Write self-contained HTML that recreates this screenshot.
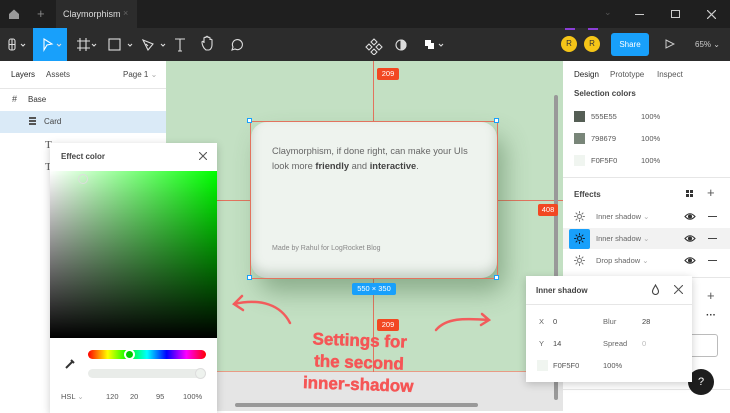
<!DOCTYPE html>
<html><head><meta charset="utf-8"><style>
*{box-sizing:border-box;margin:0;padding:0}
body{width:730px;height:411px;overflow:hidden;position:relative;font-family:"Liberation Sans",sans-serif;font-size:8px;color:#333;background:#fff}
.a{position:absolute}
.w{color:#fff}
</style></head><body>
<!-- title bar -->
<div class="a" style="left:0;top:0;width:730px;height:28px;background:#1f1f1f"></div>
<div class="a" style="left:56px;top:0;width:81px;height:28px;background:#2c2c2c"></div>
<svg class="a" style="left:8px;top:8px" width="12" height="12"><path d="M1 6 L6 1.5 L11 6 V11 H1Z" fill="#999"/></svg>
<div class="a" style="left:37px;top:6px;color:#888;font-size:13px">+</div>
<div class="a w" style="left:63px;top:9px;font-size:9px;color:#ddd">Claymorphism</div>
<div class="a" style="left:123px;top:8px;color:#666;font-size:9px">×</div>
<div class="a" style="left:604px;top:7px;color:#555;font-size:9px">⌄</div>
<div class="a" style="left:635px;top:14px;width:9px;height:1px;background:#ccc"></div>
<div class="a" style="left:671px;top:10px;width:9px;height:8px;border:1px solid #ccc"></div>
<svg class="a" style="left:707px;top:10px" width="9" height="9"><path d="M0 0L9 9M9 0L0 9" stroke="#ccc" stroke-width="1.2"/></svg>
<!-- toolbar -->
<div class="a" style="left:0;top:28px;width:730px;height:33px;background:#2c2c2c"></div>
<div class="a" style="left:33px;top:28px;width:34px;height:33px;background:#18a0fb"></div>
<svg class="a" style="left:0;top:28px" width="250" height="33" fill="none" stroke="#ddd" stroke-width="1.1">
<rect x="9" y="11" width="6" height="11" rx="2"/><path d="M12 11v11M9 16.5h6"/>
<path d="M21 16l2 2 2-2M57 16l2 2 2-2M92 16l2 2 2-2M128 16l2 2 2-2M161 16l2 2 2-2"/>
<path d="M44 11 L52 16 L47 17 L44 22Z" stroke="#fff"/>
<path d="M80 10v13M86 10v13M77 13h13M77 20h13"/>
<rect x="109" y="11" width="11" height="11"/>
<path d="M143 12 L153 16 L148 22 Z M146 16l2 2"/>
<path d="M175 11h10M180 11v12M178 23h4"/>
<path d="M206 22c-3-2-4-6-4-8 0-1 2-1 2 1v-5c0-1 2-1 2 0v-1c0-1 2-1 2 0v1c0-1 2-1 2 0v2c0-1 2-1 2 0v5c0 3-2 5-3 5z"/>
<path d="M232 22l1-3a5 5 0 1 1 2 2z"/>
</svg>
<svg class="a" style="left:365px;top:35px" width="85" height="20" fill="none" stroke="#ddd" stroke-width="1.1">
<path d="M9 4l3 3-3 3-3-3zM4 9l3 3-3 3-3-3zM14 9l3 3-3 3-3-3zM9 14l3 3-3 3-3-3z"/>
<circle cx="36" cy="10" r="5"/><path d="M36 5a5 5 0 0 1 0 10z" fill="#ddd"/>
<rect x="60" y="5" width="6" height="6" fill="#fff" stroke="none"/><rect x="63" y="8" width="6" height="6" fill="#fff" stroke="none"/>
<path d="M74 9l2 2 2-2"/>
</svg>
<div class="a" style="left:565px;top:28px;width:10px;height:2px;background:#8b3fd6"></div>
<div class="a" style="left:588px;top:28px;width:10px;height:2px;background:#8b3fd6"></div>
<div class="a" style="left:561px;top:36px;width:16px;height:16px;border-radius:50%;background:#f5c518;font-size:8px;text-align:center;line-height:16px;color:#333">R</div>
<div class="a" style="left:584px;top:36px;width:16px;height:16px;border-radius:50%;background:#f5c518;font-size:8px;text-align:center;line-height:16px;color:#333">R</div>
<div class="a w" style="left:611px;top:33px;width:38px;height:23px;border-radius:3px;background:#18a0fb;font-size:8px;text-align:center;line-height:23px">Share</div>
<svg class="a" style="left:665px;top:39px" width="10" height="10"><path d="M1 1L9 5L1 9Z" fill="none" stroke="#ccc"/></svg>
<div class="a" style="left:695px;top:40px;color:#ccc;font-size:8px">65% ⌄</div>
<!-- left panel -->
<div class="a" style="left:0;top:61px;width:166px;height:350px;background:#fff"></div>
<div class="a" style="left:11px;top:70px;font-size:8px;color:#222">Layers</div>
<div class="a" style="left:46px;top:70px;font-size:8px;color:#444">Assets</div>
<div class="a" style="left:123px;top:70px;font-size:8px;color:#444">Page 1 <span style="color:#aaa">⌄</span></div>
<div class="a" style="left:0;top:88px;width:166px;height:1px;background:#e6e6e6"></div>
<div class="a" style="left:12px;top:94px;font-size:9px;color:#444">#</div>
<div class="a" style="left:28px;top:95px;font-size:8px;color:#333">Base</div>
<div class="a" style="left:0;top:111px;width:166px;height:22px;background:#daeaf7"></div>
<div class="a" style="left:29px;top:117px;width:7px;height:1.5px;background:#555;box-shadow:0 3px 0 #555,0 6px 0 #555"></div>
<div class="a" style="left:44px;top:117px;font-size:8px;color:#444">Card</div>
<div class="a" style="left:45px;top:139px;font-size:11px;color:#555;font-family:'Liberation Serif',serif">T</div>
<div class="a" style="left:45px;top:161px;font-size:11px;color:#555;font-family:'Liberation Serif',serif">T</div>
<!-- canvas -->
<div class="a" style="left:166px;top:61px;width:397px;height:311px;background:#c3e0c3"></div>
<div class="a" style="left:166px;top:372px;width:397px;height:39px;background:#e5e5e5"></div>
<div class="a" style="left:166px;top:371px;width:397px;height:1px;background:#e89b85"></div>
<div class="a" style="left:166px;top:200px;width:397px;height:1px;background:#e2735e"></div>
<div class="a" style="left:373px;top:61px;width:1px;height:311px;background:#e2735e"></div>
<div class="a" style="left:235px;top:403px;width:243px;height:4px;border-radius:2px;background:#999"></div>
<div class="a" style="left:554px;top:95px;width:4px;height:305px;border-radius:2px;background:#999"></div>
<div class="a w" style="left:377px;top:68px;width:22px;height:12px;background:#f24822;border-radius:2px;font-size:7.5px;text-align:center;line-height:12px">209</div>
<div class="a w" style="left:377px;top:319px;width:22px;height:12px;background:#f24822;border-radius:2px;font-size:7.5px;text-align:center;line-height:12px">209</div>
<div class="a w" style="left:538px;top:204px;width:20px;height:12px;background:#f24822;border-radius:2px;font-size:7.5px;text-align:center;line-height:12px">408</div>
<!-- card -->
<div class="a" style="left:251px;top:122px;width:246px;height:156px;border-radius:16px;background:#eef3ee;box-shadow:8px 14px 24px rgba(70,110,70,.45),inset 0 -6px 10px rgba(120,140,120,.35)"></div>
<div class="a" style="left:250px;top:121px;width:248px;height:158px;border:1px solid #e2735e"></div>
<div class="a" style="left:247px;top:118px;width:5px;height:5px;background:#fff;border:1px solid #18a0fb"></div>
<div class="a" style="left:494px;top:118px;width:5px;height:5px;background:#fff;border:1px solid #18a0fb"></div>
<div class="a" style="left:247px;top:275px;width:5px;height:5px;background:#fff;border:1px solid #18a0fb"></div>
<div class="a" style="left:494px;top:275px;width:5px;height:5px;background:#fff;border:1px solid #18a0fb"></div>
<div class="a" style="left:272px;top:144px;font-size:9.3px;line-height:15px;color:#666;width:215px">Claymorphism, if done right, can make your UIs look more <b style="color:#444">friendly</b> and <b style="color:#444">interactive</b>.</div>
<div class="a" style="left:272px;top:245px;font-size:7px;color:#888">Made by Rahul for LogRocket Blog</div>
<div class="a w" style="left:352px;top:283px;width:44px;height:12px;background:#18a0fb;border-radius:2px;font-size:7.5px;text-align:center;line-height:12px">550 × 350</div>
<svg class="a" style="left:166px;top:290px" width="397" height="60" fill="none" stroke="#f25c5c" stroke-width="2.5" stroke-linecap="round">
<path d="M124 33 C115 15 95 8 68 14 M76 6 L68 14 L77 20"/>
<path d="M270 40 C280 28 298 28 323 30 M316 24 L323 30 L315 35"/>
</svg>
<div class="a" style="left:284px;top:330px;width:150px;text-align:center;font-size:17px;font-weight:bold;color:#f55656;line-height:22px;transform:rotate(2deg);-webkit-text-stroke:0.5px #f55656">Settings for<br>the second<br>inner-shadow</div>
<!-- effect color popup -->
<div class="a" style="left:50px;top:143px;width:167px;height:270px;background:#fff;box-shadow:0 2px 8px rgba(0,0,0,.2)"></div>
<div class="a" style="left:61px;top:152px;font-size:8px;font-weight:bold;color:#444">Effect color</div>
<svg class="a" style="left:199px;top:152px" width="8" height="8"><path d="M0 0L8 8M8 0L0 8" stroke="#555" stroke-width="1.1"/></svg>
<div class="a" style="left:50px;top:171px;width:167px;height:167px;background:linear-gradient(to top,#000,transparent),linear-gradient(to right,#fff,#00ff00)"></div>
<div class="a" style="left:78px;top:174px;width:10px;height:10px;border-radius:50%;border:1px solid #ddd"></div>
<svg class="a" style="left:64px;top:358px" width="12" height="12"><path d="M2 10L8 4M7 2l3 3" stroke="#333" stroke-width="2"/></svg>
<div class="a" style="left:88px;top:350px;width:118px;height:9px;border-radius:5px;background:linear-gradient(to right,#f00,#ff0,#0f0,#0ff,#00f,#f0f,#f00)"></div>
<div class="a" style="left:124px;top:349px;width:11px;height:11px;border-radius:50%;background:#0c0;border:2px solid #fff"></div>
<div class="a" style="left:88px;top:369px;width:118px;height:9px;border-radius:5px;background:#e9ece9"></div>
<div class="a" style="left:195px;top:368px;width:11px;height:11px;border-radius:50%;background:#eef2ee;border:1px solid #ddd"></div>
<div class="a" style="left:61px;top:392px;font-size:7.5px;color:#555">HSL <span style="color:#aaa">⌄</span></div>
<div class="a" style="left:106px;top:392px;font-size:7.5px;color:#555">120</div>
<div class="a" style="left:130px;top:392px;font-size:7.5px;color:#555">20</div>
<div class="a" style="left:156px;top:392px;font-size:7.5px;color:#555">95</div>
<div class="a" style="left:183px;top:392px;font-size:7.5px;color:#555">100%</div>
<!-- right panel -->
<div class="a" style="left:563px;top:61px;width:167px;height:350px;background:#fff"></div>
<div class="a" style="left:574px;top:70px;font-size:8px;color:#222">Design</div>
<div class="a" style="left:610px;top:70px;font-size:8px;color:#555">Prototype</div>
<div class="a" style="left:657px;top:70px;font-size:8px;color:#555">Inspect</div>
<div class="a" style="left:574px;top:89px;font-size:8px;font-weight:bold;color:#444">Selection colors</div>
<div class="a" style="left:574px;top:111px;width:11px;height:11px;background:#555e55"></div>
<div class="a" style="left:591px;top:112px;font-size:7.5px;color:#555">555E55</div>
<div class="a" style="left:641px;top:112px;font-size:7.5px;color:#555">100%</div>
<div class="a" style="left:574px;top:133px;width:11px;height:11px;background:#798679"></div>
<div class="a" style="left:591px;top:134px;font-size:7.5px;color:#555">798679</div>
<div class="a" style="left:641px;top:134px;font-size:7.5px;color:#555">100%</div>
<div class="a" style="left:574px;top:155px;width:11px;height:11px;background:#f0f5f0"></div>
<div class="a" style="left:591px;top:156px;font-size:7.5px;color:#555">F0F5F0</div>
<div class="a" style="left:641px;top:156px;font-size:7.5px;color:#555">100%</div>
<div class="a" style="left:563px;top:177px;width:167px;height:1px;background:#e6e6e6"></div>
<div class="a" style="left:574px;top:190px;font-size:8px;font-weight:bold;color:#444">Effects</div>
<div class="a" style="left:686px;top:190px;width:3px;height:3px;background:#333;box-shadow:4px 0 #333,0 4px #333,4px 4px #333"></div>
<div class="a" style="left:707px;top:185px;font-size:13px;color:#555">+</div>
<div class="a" style="left:563px;top:228px;width:167px;height:21px;background:#f2f2f2"></div>
<div class="a" style="left:569px;top:229px;width:21px;height:20px;background:#18a0fb;border-radius:2px"></div>
<svg class="a" style="left:572px;top:210px" width="15" height="60" fill="none" stroke-width="1" stroke-linecap="round">
<g stroke="#777"><circle cx="7.5" cy="6.5" r="2"/><path d="M7.5 1.5v1.5M7.5 10v1.5M2.5 6.5H4M11 6.5h1.5M4 3l1 1M10 9l1 1M11 3l-1 1M4 10l1-1"/></g>
<g stroke="#123"><circle cx="7.5" cy="28.5" r="2"/><path d="M7.5 23.5v1.5M7.5 32v1.5M2.5 28.5H4M11 28.5h1.5M4 25l1 1M10 31l1 1M11 25l-1 1M4 32l1-1"/></g>
<g stroke="#777"><circle cx="7.5" cy="50.5" r="2"/><path d="M7.5 45.5v1.5M7.5 54v1.5M2.5 50.5H4M11 50.5h1.5M4 47l1 1M10 53l1 1M11 47l-1 1M4 54l1-1"/></g>
</svg>
<div class="a" style="left:596px;top:212px;font-size:7.5px;color:#666">Inner shadow <span style="color:#aaa">⌄</span></div>
<div class="a" style="left:596px;top:234px;font-size:7.5px;color:#666">Inner shadow <span style="color:#aaa">⌄</span></div>
<div class="a" style="left:596px;top:256px;font-size:7.5px;color:#666">Drop shadow <span style="color:#aaa">⌄</span></div>
<svg class="a" style="left:684px;top:210px" width="12" height="56" fill="none" stroke="#333" stroke-width="1.1">
<path d="M1 6.5Q6 1 11 6.5Q6 12 1 6.5Z"/><circle cx="6" cy="6.5" r="1.5" fill="#333"/>
<path d="M1 28.5Q6 23 11 28.5Q6 34 1 28.5Z"/><circle cx="6" cy="28.5" r="1.5" fill="#333"/>
<path d="M1 50.5Q6 45 11 50.5Q6 56 1 50.5Z"/><circle cx="6" cy="50.5" r="1.5" fill="#333"/>
</svg>
<div class="a" style="left:708px;top:216px;width:9px;height:1.2px;background:#444;box-shadow:0 22px #444,0 44px #444"></div>
<div class="a" style="left:563px;top:277px;width:167px;height:1px;background:#e6e6e6"></div>
<div class="a" style="left:707px;top:288px;font-size:13px;color:#555">+</div>
<div class="a" style="left:706px;top:310px;font-size:10px;color:#333;font-weight:bold">···</div>
<div class="a" style="left:680px;top:334px;width:38px;height:23px;border:1px solid #bbb;border-radius:3px;background:#fff"></div>
<div class="a" style="left:563px;top:389px;width:167px;height:1px;background:#e6e6e6"></div>
<div class="a w" style="left:688px;top:369px;width:26px;height:26px;border-radius:50%;background:#1e1e1e;text-align:center;line-height:26px;font-size:11px">?</div>
<!-- inner shadow popup -->
<div class="a" style="left:526px;top:276px;width:166px;height:106px;background:#fff;box-shadow:0 2px 8px rgba(0,0,0,.2)"></div>
<div class="a" style="left:536px;top:286px;font-size:8px;font-weight:bold;color:#444">Inner shadow</div>
<svg class="a" style="left:651px;top:284px" width="9" height="11"><path d="M4.5 1C3 4 1.5 5.5 1.5 7.5a3 3 0 0 0 6 0C7.5 5.5 6 4 4.5 1z" fill="none" stroke="#444" stroke-width="1.1"/></svg>
<svg class="a" style="left:674px;top:285px" width="9" height="9"><path d="M0 0L9 9M9 0L0 9" stroke="#555" stroke-width="1.1"/></svg>
<div class="a" style="left:526px;top:304px;width:166px;height:1px;background:#e6e6e6"></div>
<div class="a" style="left:539px;top:317px;font-size:7.5px;color:#666">X</div>
<div class="a" style="left:553px;top:317px;font-size:7.5px;color:#444">0</div>
<div class="a" style="left:603px;top:317px;font-size:7.5px;color:#666">Blur</div>
<div class="a" style="left:642px;top:317px;font-size:7.5px;color:#444">28</div>
<div class="a" style="left:539px;top:339px;font-size:7.5px;color:#666">Y</div>
<div class="a" style="left:553px;top:339px;font-size:7.5px;color:#444">14</div>
<div class="a" style="left:603px;top:339px;font-size:7.5px;color:#666">Spread</div>
<div class="a" style="left:642px;top:339px;font-size:7.5px;color:#bbb">0</div>
<div class="a" style="left:537px;top:360px;width:11px;height:11px;background:#f0f5f0"></div>
<div class="a" style="left:553px;top:361px;font-size:7.5px;color:#555">F0F5F0</div>
<div class="a" style="left:603px;top:361px;font-size:7.5px;color:#555">100%</div>
</body></html>
